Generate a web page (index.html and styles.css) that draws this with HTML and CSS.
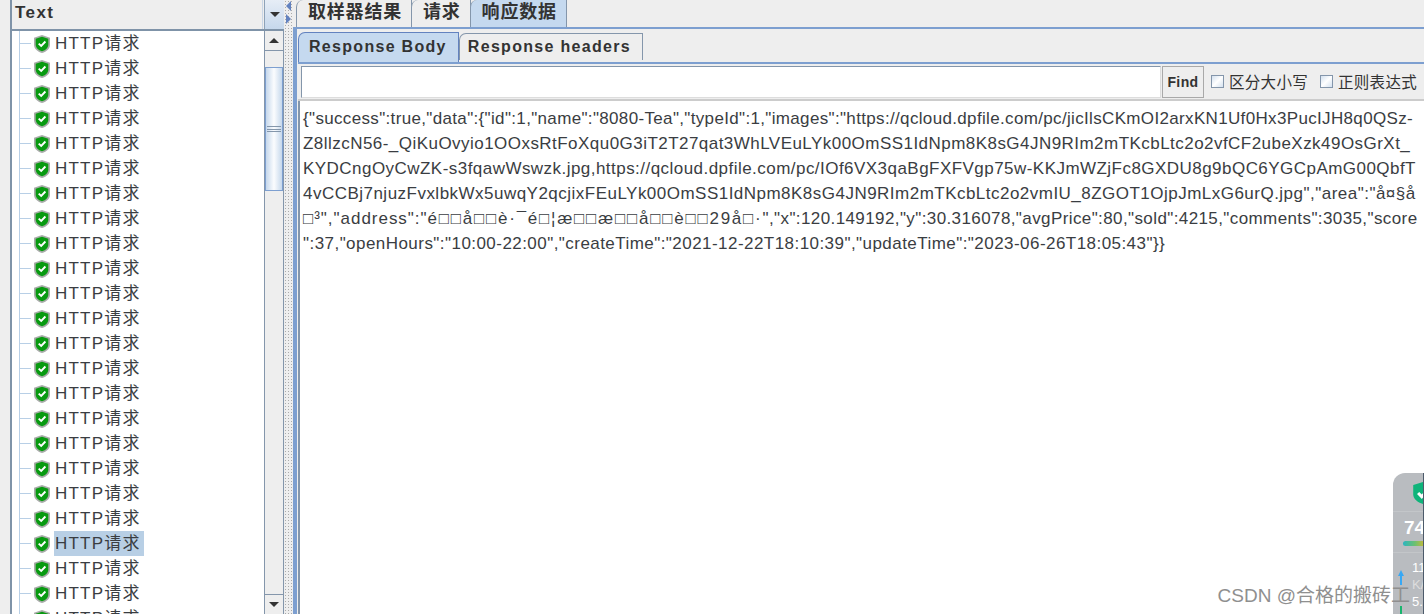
FILE: index.html
```html
<!DOCTYPE html>
<html lang="zh">
<head>
<meta charset="utf-8">
<title>HTTP请求 响应数据</title>
<link rel="stylesheet" href="styles.css">
</head>
<body>
<svg class="defs" width="0" height="0" aria-hidden="true">
  <symbol id="shield" viewBox="0 0 16 18">
    <path d="M8 0 16 2.700V9.500c0 4.200-3.300 7-8 8.500C3.300 16.500 0 13.700 0 9.500V2.700z" fill="#a9aca9"/>
    <path d="M8 1.700 14.300 3.800V9.500c0 3.300-2.600 5.600-6.300 6.800-3.700-1.200-6.300-3.500-6.300-6.800V3.800z" fill="#089a10"/>
    <path d="M4.700 8.600 7.200 11l4.200-4.500" fill="none" stroke="#fff" stroke-width="1.900"/>
  </symbol>
</svg>
<div class="app">
  <aside class="left">
    <div class="head">
      <div class="combo">Text</div>
      <div class="combo-btn"><i class="tri down"></i></div>
    </div>
    <div class="tree-wrap">
      <ul class="tree" id="tree">
        <li><svg class="ic"><use href="#shield"/></svg><span>HTTP请求</span></li>
        <li><svg class="ic"><use href="#shield"/></svg><span>HTTP请求</span></li>
        <li><svg class="ic"><use href="#shield"/></svg><span>HTTP请求</span></li>
        <li><svg class="ic"><use href="#shield"/></svg><span>HTTP请求</span></li>
        <li><svg class="ic"><use href="#shield"/></svg><span>HTTP请求</span></li>
        <li><svg class="ic"><use href="#shield"/></svg><span>HTTP请求</span></li>
        <li><svg class="ic"><use href="#shield"/></svg><span>HTTP请求</span></li>
        <li><svg class="ic"><use href="#shield"/></svg><span>HTTP请求</span></li>
        <li><svg class="ic"><use href="#shield"/></svg><span>HTTP请求</span></li>
        <li><svg class="ic"><use href="#shield"/></svg><span>HTTP请求</span></li>
        <li><svg class="ic"><use href="#shield"/></svg><span>HTTP请求</span></li>
        <li><svg class="ic"><use href="#shield"/></svg><span>HTTP请求</span></li>
        <li><svg class="ic"><use href="#shield"/></svg><span>HTTP请求</span></li>
        <li><svg class="ic"><use href="#shield"/></svg><span>HTTP请求</span></li>
        <li><svg class="ic"><use href="#shield"/></svg><span>HTTP请求</span></li>
        <li><svg class="ic"><use href="#shield"/></svg><span>HTTP请求</span></li>
        <li><svg class="ic"><use href="#shield"/></svg><span>HTTP请求</span></li>
        <li><svg class="ic"><use href="#shield"/></svg><span>HTTP请求</span></li>
        <li><svg class="ic"><use href="#shield"/></svg><span>HTTP请求</span></li>
        <li><svg class="ic"><use href="#shield"/></svg><span>HTTP请求</span></li>
        <li><svg class="ic"><use href="#shield"/></svg><span class="sel">HTTP请求</span></li>
        <li><svg class="ic"><use href="#shield"/></svg><span>HTTP请求</span></li>
        <li><svg class="ic"><use href="#shield"/></svg><span>HTTP请求</span></li>
        <li><svg class="ic"><use href="#shield"/></svg><span>HTTP请求</span></li>
      </ul>
      <div class="sb">
        <div class="sb-btn"><i class="tri up"></i></div>
        <div class="sb-gap"></div>
        <div class="sb-thumb"><div class="grip"></div></div>
        <div class="sb-track"></div>
        <div class="sb-btn"><i class="tri down"></i></div>
      </div>
    </div>
  </aside>
  <div class="split">
    <i class="tri sl"></i>
    <i class="tri sr"></i>
  </div>
  <main class="right">
    <div class="tabs t1">
      <div class="tab">取样器结果</div>
      <div class="tab">请求</div>
      <div class="tab on">响应数据</div>
    </div>
    <div class="panel">
      <div class="tabs t2">
        <div class="tab on">Response Body</div>
        <div class="tab">Response headers</div>
      </div>
      <div class="search">
        <div class="input"></div>
        <div class="find">Find</div>
        <label class="chk"><i class="box"></i>区分大小写</label>
        <label class="chk"><i class="box"></i>正则表达式</label>
      </div>
      <div class="body">
        <div class="ln1">{"success":true,"data":{"id":1,"name":"8080-Tea","typeId":1,"images":"https://qcloud.dpfile.com/pc/jicIlsCKmOI2arxKN1Uf0Hx3PucIJH8q0QSz-</div>
        <div class="ln2">Z8llzcN56-_QiKuOvyio1OOxsRtFoXqu0G3iT2T27qat3WhLVEuLYk00OmSS1IdNpm8K8sG4JN9RIm2mTKcbLtc2o2vfCF2ubeXzk49OsGrXt_</div>
        <div class="ln2">KYDCngOyCwZK-s3fqawWswzk.jpg,https://qcloud.dpfile.com/pc/IOf6VX3qaBgFXFVgp75w-KKJmWZjFc8GXDU8g9bQC6YGCpAmG00QbfT</div>
        <div class="ln3">4vCCBj7njuzFvxlbkWx5uwqY2qcjixFEuLYk00OmSS1IdNpm8K8sG4JN9RIm2mTKcbLtc2o2vmIU_8ZGOT1OjpJmLxG6urQ.jpg","area":"å¤§å</div>
        <div class="ln4"><span class="seg-a">□³","address":"</span><span class="seg-b">é□□å□□è·¯é□¦æ□□æ□□å□□è□□29å□·</span>","x":120.149192,"y":30.316078,"avgPrice":80,"sold":4215,"comments":3035,"score</div>
        <div class="ln5">":37,"openHours":"10:00-22:00","createTime":"2021-12-22T18:10:39","updateTime":"2023-06-26T18:05:43"}}</div>
      </div>
    </div>
  </main>
</div>
<div class="widget">
  <svg class="w-shield" viewBox="0 0 16 18"><path d="M8 0 16 2.500V10c0 4-3.500 6.500-8 8-4.500-1.500-8-4-8-8V2.500z" fill="#0fb47a"/><path d="M4 9l3 3 5-5.500" fill="none" stroke="#fff" stroke-width="2.500"/></svg>
  <div class="w-line l1"></div>
  <div class="w-num">74</div>
  <div class="w-bar"></div>
  <div class="w-line l2"></div>
  <svg class="w-up" viewBox="0 0 6 15"><path d="M3 0 6 6H4V15H2V6H0z" fill="#37a8f5"/></svg>
  <svg class="w-down" viewBox="0 0 6 15"><path d="M3 15 6 9H4V0H2V9H0z" fill="#18b56e"/></svg>
  <div class="w-a">11</div>
  <div class="w-u">K/</div>
  <div class="w-b">5.</div>
</div>
<div class="mark">CSDN @合格的搬砖工</div>
</body>
</html>
```
FILE: styles.css
```css
* { box-sizing: border-box; }
html, body { margin: 0; height: 100%; overflow: hidden; }
body { background: #eeeeee; font-family: "Liberation Sans", "Noto Sans CJK SC", sans-serif; color: #333; }
.defs { position: absolute; }
.app { display: flex; height: 614px; }

.left { width: 284px; padding-left: 10px; display: flex; flex-direction: column; flex: none; }
.head { height: 31px; flex: none; display: flex; border-left: 2px solid #7f93a8; border-bottom: 2px solid #7f93a8; }
.combo { flex: 1; padding: 2px 0 0 3px; font-size: 17px; font-weight: 700; letter-spacing: 1.4px; line-height: 22px; border-right: 1px solid #c9d6e6; }
.combo-btn { width: 20px; margin-left: 1px; background: linear-gradient(#e6edf6, #c6d8ec); display: flex; align-items: center; justify-content: center; border-left: 1px solid #8da2b8; }
.tree-wrap { flex: 1; display: flex; min-height: 0; border-left: 2px solid #7f93a8; background: #fff; }
.tree { flex: 1; margin: 0; padding: 0; list-style: none; overflow: hidden; position: relative; }
.tree::before { content: ""; position: absolute; left: 7px; top: 0; bottom: 0; border-left: 1px solid #b8cfe6; }
.tree li { position: relative; height: 25px; display: flex; align-items: center; padding-left: 22px; font-size: 17px; letter-spacing: 1.2px; }
.tree li::before { content: ""; position: absolute; left: 8px; top: 12px; width: 11px; border-top: 1px solid #b8cfe6; }
.ic { width: 16px; height: 18px; flex: none; margin-right: 5px; }
.tree li span { display: block; height: 25px; line-height: 25px; padding: 0 3px 0 1px; margin-left: -1px; color: #3a3d42; }
.tree li .sel { background: #b8cfe5; }
.sb { width: 20px; flex: none; display: flex; flex-direction: column; border-left: 1px solid #8496ab; border-right: 1px solid #8496ab; background: #eee; }
.sb-btn { height: 20px; flex: none; display: flex; align-items: center; justify-content: center; background: #eee; border-bottom: 1px solid #8496ab; }
.sb-btn:last-child { border-bottom: 0; border-top: 1px solid #8496ab; }
.sb-gap { height: 16px; flex: none; }
.sb-thumb { height: 124px; flex: none; background: linear-gradient(90deg, #c6d8ec, #fbfcfe 50%, #c6d8ec); border: 1px solid #7d9fd0; display: flex; align-items: center; justify-content: center; }
.grip { width: 14px; height: 6px; border-top: 1px solid #8496ab; border-bottom: 1px solid #8496ab; background: linear-gradient(#8496ab, #8496ab) center/100% 1px no-repeat; }
.sb-track { flex: 1; }
.tri { display: block; width: 0; height: 0; border-left: 5px solid transparent; border-right: 5px solid transparent; }
.tri.down { border-top: 5px solid #333; }
.tri.up { border-bottom: 5px solid #333; }

.split { width: 9px; flex: none; display: flex; flex-direction: column; align-items: center; gap: 3px; background: radial-gradient(#aaa 35%, transparent 40%) 3px 0/3px 3px; }
.tri.sl { margin-top: 1px; border: 0; border-top: 5px solid transparent; border-bottom: 5px solid transparent; border-right: 5px solid #6382bf; }
.tri.sr { border: 0; border-top: 5px solid transparent; border-bottom: 5px solid transparent; border-left: 5px solid #6382bf; }

.right { flex: 1; min-width: 0; display: flex; flex-direction: column; }
.tabs { display: flex; flex: none; }
.tab { border: 1px solid #8496ab; border-bottom: 0; border-top-left-radius: 7px 7px; background: #eee; font-weight: 700; color: #333; }
.tab.on { background: #c5d9ef; }
.t1 { height: 27px; padding-left: 3px; }
.t1 .tab { padding: 0 9px 0 11px; margin-right: -1px; font-size: 18px; line-height: 24px; letter-spacing: .8px; border-top: 0; }
.panel { flex: 1; min-height: 0; display: flex; flex-direction: column; border-top: 2px solid #7d9fd0; border-left: 4px solid #7d9fd0; padding-left: 1px; }
.t2 { height: 30px; margin-top: 3px; }
.t2 .tab { padding: 0 11px 0 8px; font-size: 16px; letter-spacing: 1.3px; line-height: 25px; border-color: #8496ab; margin-top: 1px; margin-bottom: 2px; }
.t2 .tab.on { border-color: #6382bf; padding: 0 11px 0 10px; margin: 0; line-height: 27px; }
.search { height: 39px; flex: none; display: flex; align-items: center; border-top: 2px solid #7d9fd0; border-bottom: 2px solid #ccc; }
.input { width: 860px; height: 32px; margin-left: 3px; flex: none; background: #fff; border: 1px solid #8496ab; border-right-color: #ddd; border-bottom-color: #ddd; }
.find { width: 42px; height: 32px; margin-left: 1px; flex: none; border: 1px solid #a9a9a9; font-size: 14px; font-weight: 700; letter-spacing: .4px; line-height: 30px; text-align: center; }
.chk { display: flex; align-items: center; padding-bottom: 2px; font-size: 15.500px; letter-spacing: .3px; white-space: nowrap; margin-left: 7px; color: #333; }
.chk + .chk { margin-left: 12px; }
.box { width: 13px; height: 13px; margin: 2px 5px 0 0; border: 1px solid #8496ab; background: linear-gradient(135deg, #d4e1ef, #fff 50%, #d4e1ef); }
.body { flex: 1; min-height: 0; background: #fff; border-left: 2px solid #8496ab; padding: 5px 0 0 3px; font-size: 17px; letter-spacing: .37px; line-height: 25px; white-space: nowrap; overflow: hidden; color: #3a3d42; }
.ln1 { letter-spacing: .34px; }
.ln2 { letter-spacing: .46px; }
.ln3 { letter-spacing: .48px; }
.ln4 { letter-spacing: .4px; }
.ln5 { letter-spacing: .45px; }
.seg-a { letter-spacing: .97px; }
.seg-b { letter-spacing: 1.750px; }

.widget { position: absolute; left: 1393px; top: 473px; width: 31px; height: 141px; border-radius: 12px 0 0 0; background: #b9bcc0; color: #fff; border-right: 1px solid #4d5b6b; overflow: hidden; }
.w-shield { position: absolute; left: 20px; top: 9px; width: 20px; height: 22px; }
.w-line { position: absolute; left: 0; right: 0; border-top: 1px solid #c3c6c9; }
.l1 { top: 38px; }
.l2 { top: 79px; }
.w-num { position: absolute; left: 11px; top: 44px; font-size: 19px; font-weight: 700; }
.w-bar { position: absolute; left: 10px; top: 68px; width: 34px; height: 5px; border-radius: 3px 0 0 3px; background: linear-gradient(90deg, #2bb5c0, #6cc070 35%, #e0b92a 70%); }
.w-up { position: absolute; left: 5px; top: 97px; width: 6px; height: 15px; }
.w-down { position: absolute; left: 5px; top: 133px; width: 6px; height: 15px; }
.w-a, .w-u, .w-b { position: absolute; left: 19px; font-size: 13px; }
.w-a { top: 87px; }
.w-u { top: 104px; color: #ddd; }
.w-b { top: 121px; }
.mark { position: absolute; right: 14px; top: 580px; font-size: 19px; color: #8f8f8f; }
```
